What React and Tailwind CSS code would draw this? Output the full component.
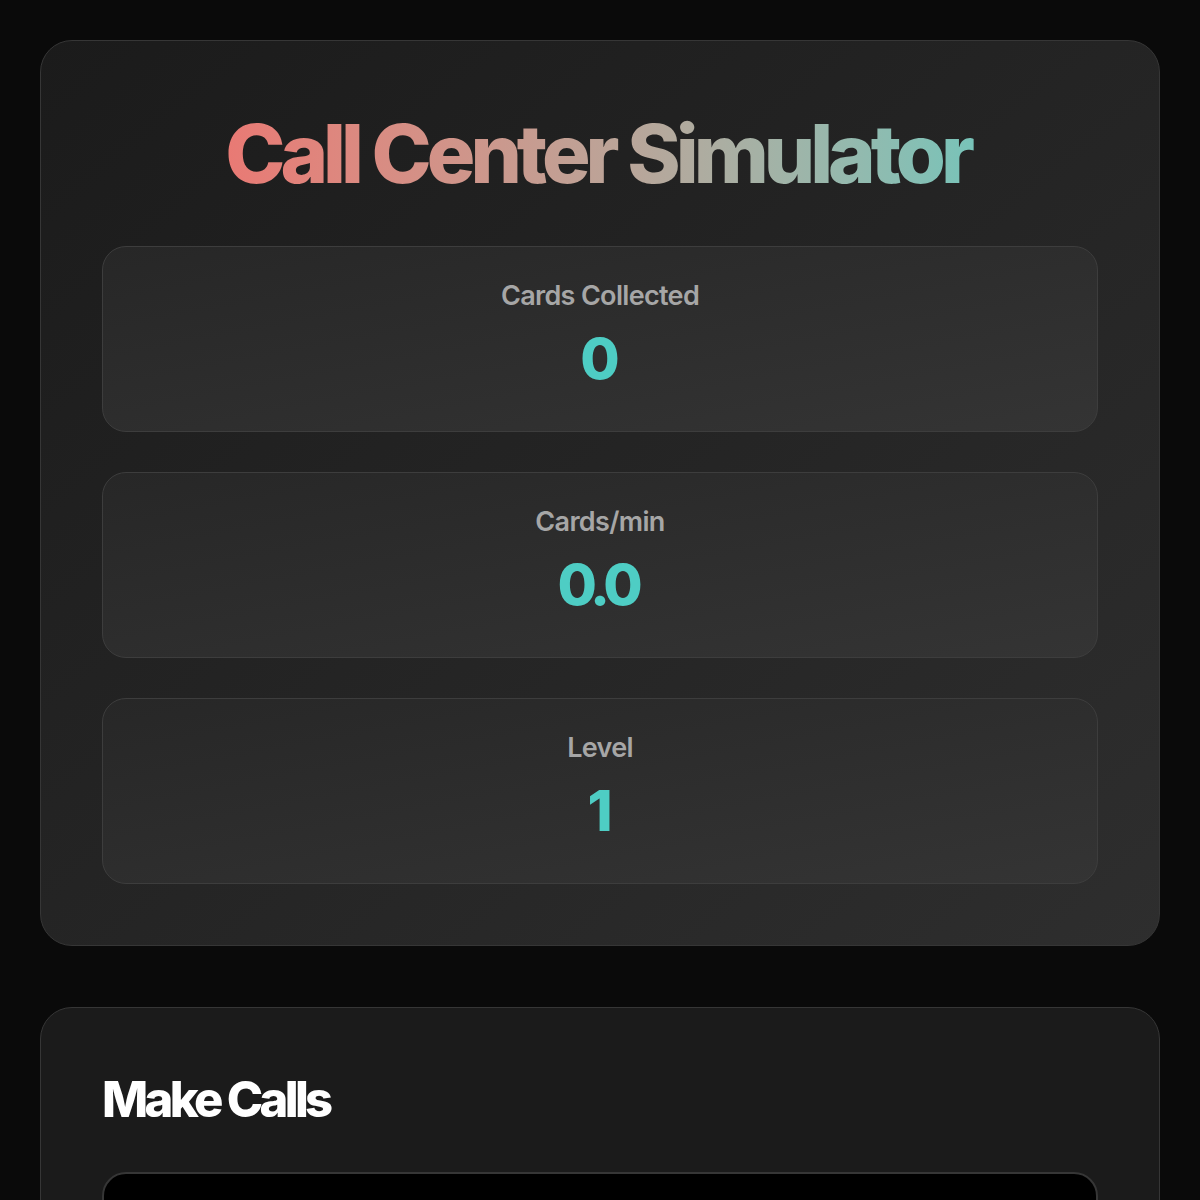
import React from "react";

const stats = [
    { label: "Cards Collected", value: "0" },
    { label: "Cards/min", value: "0.0" },
    { label: "Level", value: "1" },
];

function StatCard({ label, value }) {
    return (
        <div className="h-[186px] rounded-[24px] border border-[#3d3d3d] bg-gradient-to-br from-[#272727] to-[#343434] flex flex-col items-center pt-[33px]">
            <div className="text-[27px] leading-[32px] font-semibold tracking-[-0.025em] text-[#a6a6a6]">{label}</div>
            <div className="mt-[15px] pr-[0.09em] text-[57px] leading-[64px] font-extrabold tracking-[-0.09em] text-[#4ecdc4]">{value}</div>
        </div>
    );
}

export default function App() {
    return (
        <div
            className="min-h-screen bg-[#0a0a0a] p-10 flex flex-col gap-[61px]"
            style={{ fontFamily: "Inter, 'Noto Sans', sans-serif" }}
        >
            <div className="rounded-[32px] border border-[#363636] bg-gradient-to-br from-[#1b1b1b] to-[#2e2e2e] px-[61px] pt-[65px] pb-[61px]">
                <h1 className="text-center pr-[0.06em] text-[81px] leading-[96px] font-extrabold tracking-[-0.062em] bg-gradient-to-r from-[#f56868] to-[#4ecdc4] bg-clip-text text-transparent">
                    Call Center Simulator
                </h1>
                <div className="mt-[44px] flex flex-col gap-[40px]">
                    {stats.map((s) => (
                        <StatCard key={s.label} label={s.label} value={s.value} />
                    ))}
                </div>
            </div>

            <div className="rounded-[32px] border border-[#363636] bg-[#1b1b1b] px-[61px] pt-[60px] pb-[61px]">
                <h2 className="text-[49px] leading-[64px] font-extrabold tracking-[-0.075em] text-white">Make Calls</h2>
                <div className="mt-[40px] h-[300px] rounded-[24px] border-2 border-[#363636] bg-black"></div>
            </div>
        </div>
    );
}
